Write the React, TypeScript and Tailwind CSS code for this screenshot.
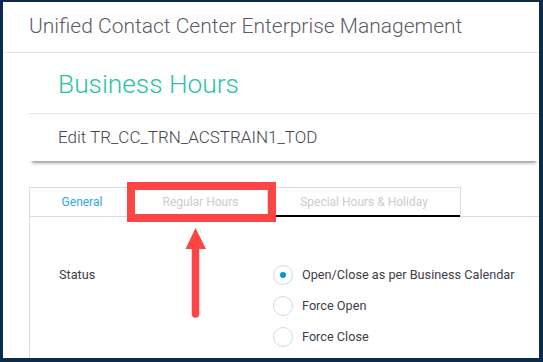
import React from 'react';

const font = { fontFamily: 'Roboto, "Liberation Sans", sans-serif' };

const Radio: React.FC<{ label: string; checked?: boolean }> = ({ label, checked }) => (
  <div className="flex items-center h-[31px]">
    <span className="w-[20px] h-[20px] rounded-full border border-[#d9d9d9] flex items-center justify-center shrink-0">
      {checked && <span className="w-[6px] h-[6px] rounded-full bg-[#0b93d3]" />}
    </span>
    <span className="ml-[9px] text-[12.7px] text-[#3d3d48]">{label}</span>
  </div>
);

export default function App() {
  return (
    <div
      className="w-[543px] h-[362px] overflow-hidden bg-white border-[#0c2b4b] border-t-[2px] border-l-[3px] border-r-[4px] border-b-[4px] relative"
      style={font}
    >
      {/* top bar */}
      <div className="h-[51px] border-b border-[#e6e6e6] flex items-center pl-[26px]">
        <span className="text-[21px] font-light text-[#5c5c68]">
          Unified Contact Center Enterprise Management
        </span>
      </div>

      {/* title card */}
      <div className="ml-[26px] shadow-[0_5px_3px_-3px_rgba(0,0,0,0.4)]">
        <div className="h-[61px] border-b border-[#e6e6e6] flex items-center pl-[29px] pt-[4px]">
          <span className="text-[26.3px] font-light text-[#2bc4a4]">Business Hours</span>
        </div>
        <div className="h-[47px] flex items-center pl-[29px]">
          <span className="text-[17px] font-light text-[#45454f]">Edit TR_CC_TRN_ACSTRAIN1_TOD</span>
        </div>
      </div>

      {/* tabs */}
      <div className="ml-[26px] mt-[26px] flex border-b border-[#dcdcdc] text-[12px]">
        <div className="w-[105px] h-[29px] border-l border-t border-[#dcdcdc] flex items-center justify-center text-[#34a8dc]">
          General
        </div>
        <div className="w-[134px] h-[29px] border-t border-r border-[#dcdcdc] flex items-center justify-center text-[#cccccc]">
          Regular Hours
        </div>
        <div className="w-[193px] h-[29px] border-t border-r border-[#dcdcdc] flex items-center justify-center text-[#cccccc] relative">
          Special Hours &amp; Holiday
          <span className="absolute left-0 right-0 bottom-[-1px] h-[2px] bg-black" />
        </div>
      </div>

      {/* content */}
      <div className="ml-[26px] border-l border-[#dcdcdc] h-[200px] flex pt-[42px]">
        <div className="w-[243px] pl-[29px] text-[12.7px] text-[#3d3d48] h-[31px] flex items-center">Status</div>
        <div className="flex flex-col">
          <Radio label="Open/Close as per Business Calendar" checked />
          <Radio label="Force Open" />
          <Radio label="Force Close" />
        </div>
      </div>

      {/* annotation overlay */}
      <div className="absolute left-[124px] top-[180px] w-[149px] h-[40px] border-[8px] border-[#fd4545]" />
      <svg className="absolute left-[182px] top-[226px]" width="22" height="90" viewBox="0 0 22 90">
        <polygon points="10.5,0 0.5,21 21,21" fill="#fd4545" />
        <line x1="10.5" y1="20" x2="10.5" y2="86" stroke="#fd4545" strokeWidth="7.5" strokeLinecap="round" />
      </svg>
    </div>
  );
}
